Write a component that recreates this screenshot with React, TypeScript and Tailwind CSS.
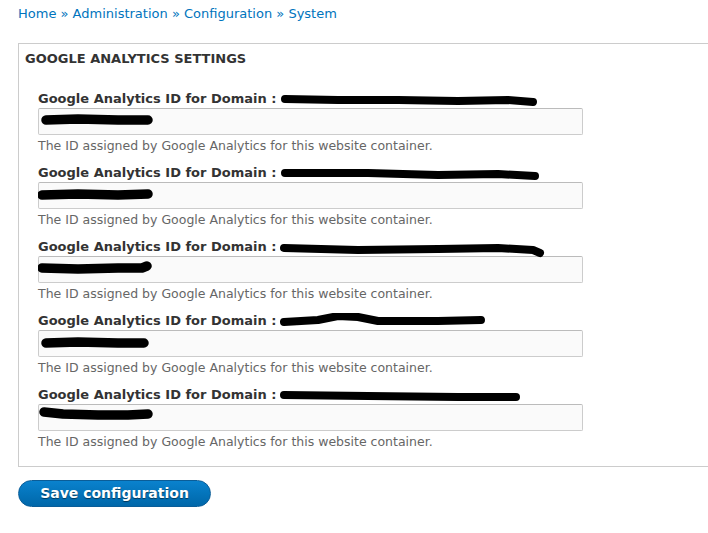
import React from "react";

type Row = { label: number[][]; input: number[][] };

const rows: Row[] = [
  {
    label: [[247, 8], [300, 9], [360, 9], [420, 10], [470, 9], [495, 11]],
    input: [[8, 29], [40, 28], [80, 29], [110, 29]],
  },
  {
    label: [[247, 8], [330, 8], [400, 10], [460, 9], [497, 11]],
    input: [[4, 30], [40, 29], [80, 30], [110, 29]],
  },
  {
    label: [[246, 9], [320, 11], [400, 10], [460, 9], [495, 11], [502, 14]],
    input: [[4, 29], [40, 30], [80, 29], [104, 29], [109, 27]],
  },
  {
    label: [[246, 9], [280, 7], [300, 3], [320, 4], [340, 8], [400, 8], [443, 7]],
    input: [[8, 30], [40, 29], [80, 30], [106, 30]],
  },
  {
    label: [[246, 8], [330, 9], [420, 10], [478, 10]],
    input: [[6, 25], [25, 27], [60, 28], [90, 28], [110, 27]],
  },
];

function pts(p: number[][]) {
  return p.map((q) => q.join(",")).join(" ");
}

function FieldRow({ row }: { row: Row }) {
  return (
    <div className="relative">
      <div className="text-[13px] leading-[16px] font-bold text-[#333]">
        Google Analytics ID for Domain :
      </div>
      <div className="mt-[1px] h-[27px] w-[545px] border border-[#ccc] border-t-[#bbb] bg-[#fafafa] rounded-[2px]" />
      <div className="mt-[3px] text-[12.5px] leading-[16px] text-[#666]">
        The ID assigned by Google Analytics for this website container.
      </div>
      <svg
        className="absolute left-0 top-0 pointer-events-none"
        width="560"
        height="50"
        viewBox="0 0 560 50"
      >
        <polyline
          points={pts(row.label)}
          fill="none"
          stroke="#000"
          strokeWidth="8"
          strokeLinecap="round"
          strokeLinejoin="round"
        />
        <polyline
          points={pts(row.input)}
          fill="none"
          stroke="#000"
          strokeWidth="9.5"
          strokeLinecap="round"
          strokeLinejoin="round"
        />
      </svg>
    </div>
  );
}

export default function App() {
  return (
    <div className="w-[708px] h-[533px] overflow-hidden bg-white font-['DejaVu_Sans',sans-serif]">
      <div className="pl-[18px] pt-[6px] text-[13px] leading-[16px] text-[#0074bd]">
        <span>Home</span> » <span>Administration</span> » <span>Configuration</span> »{" "}
        <span>System</span>
      </div>
      <div className="ml-[18px] mt-[21px] w-[690px] border border-[#ccc] border-r-0 pb-[16px]">
        <div className="pl-[6px] pt-[7px] text-[13px] leading-[16px] font-bold uppercase text-[#333]">
          Google Analytics Settings
        </div>
        <div className="pl-[19px] pt-[24px] flex flex-col gap-[11px]">
          {rows.map((r, i) => (
            <FieldRow key={i} row={r} />
          ))}
        </div>
      </div>
      <div className="pl-[18px] mt-[13px]">
        <button className="w-[193px] h-[27px] pb-[2px] rounded-full border border-[#0a5d98] bg-linear-to-b from-[#0a82ce] to-[#0067a9] text-white text-[14px] font-bold leading-[16px] [text-shadow:0_1px_1px_rgba(0,0,0,0.5)]">
          Save configuration
        </button>
      </div>
    </div>
  );
}
